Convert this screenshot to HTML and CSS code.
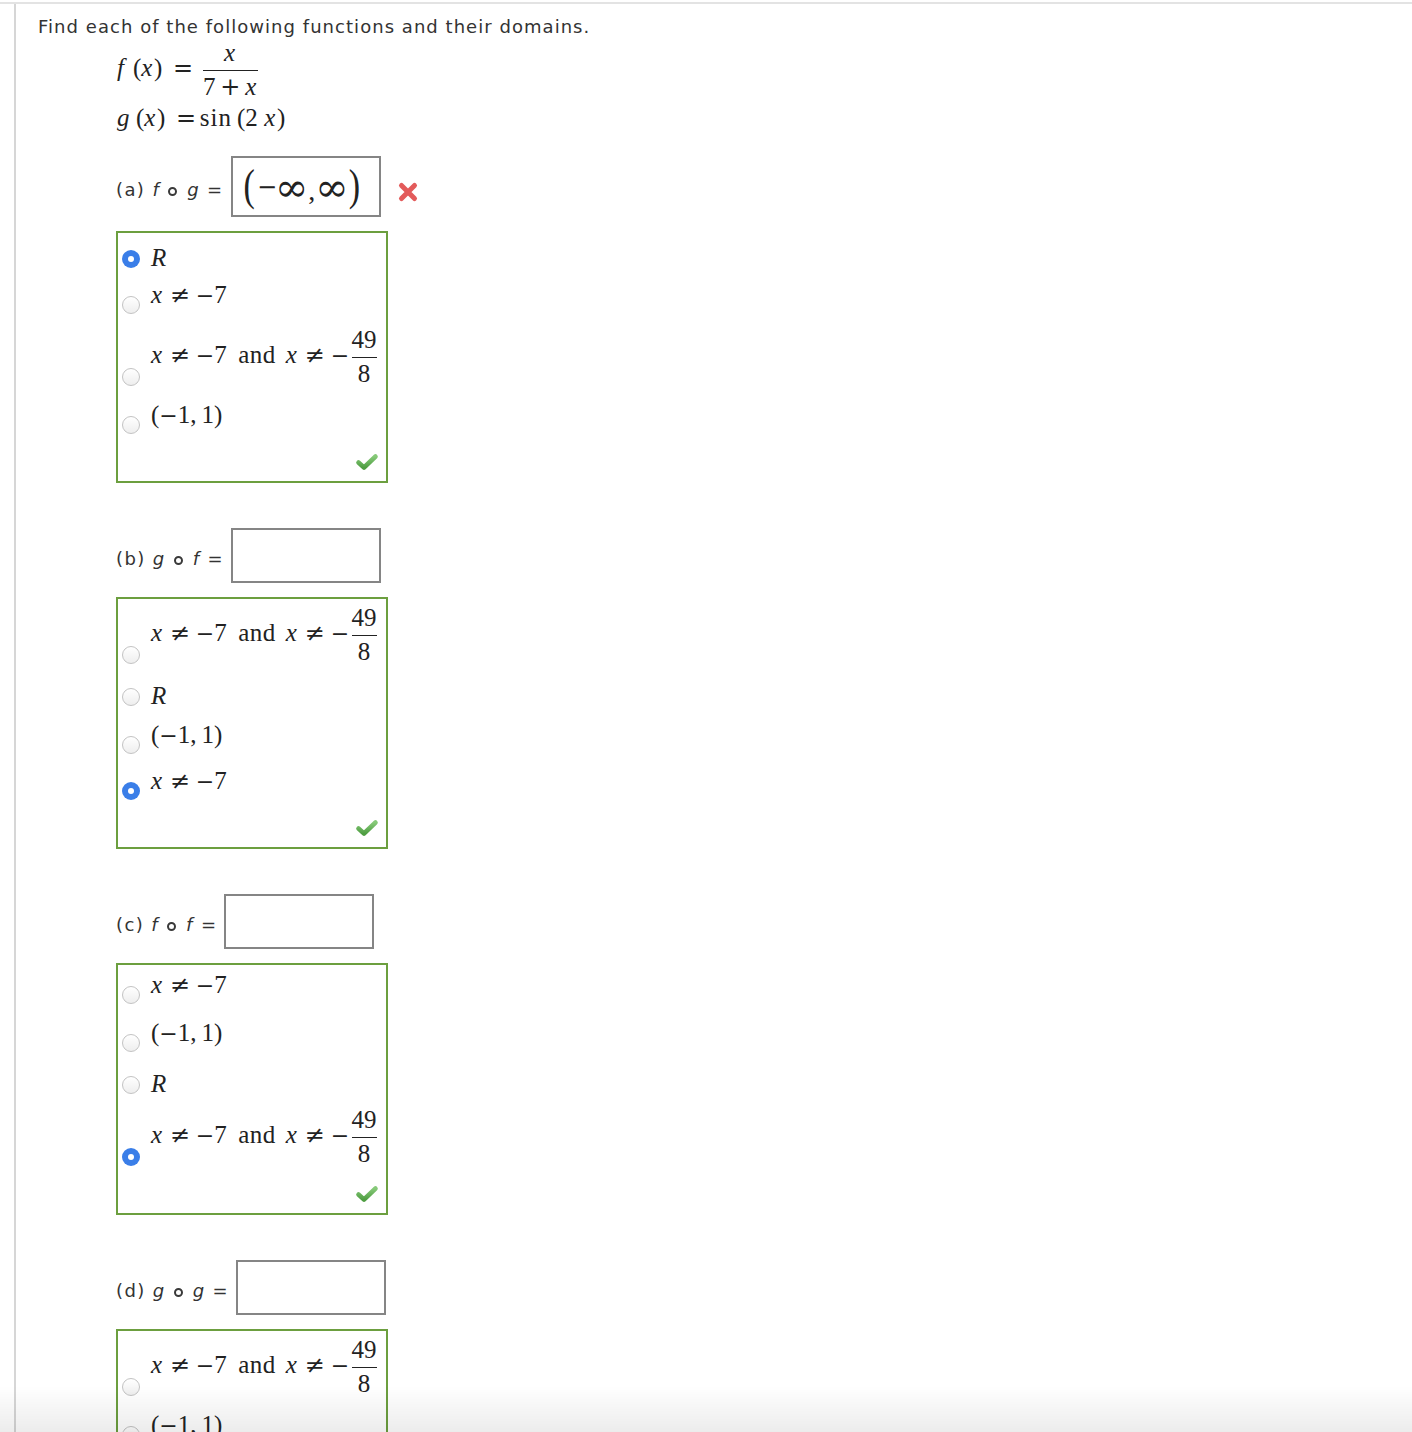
FILE: index.html
```html
<!DOCTYPE html>
<html lang="en">
<head>
<meta charset="utf-8">
<title>Composite functions</title>
<link rel="stylesheet" href="styles.css">
</head>
<body>
<div class="page">
  <div class="content">
    <p class="intro">Find each of the following functions and their domains.</p>
    <div class="defs">
      <div class="mrow frow"><span class="mi wf">f</span><span class="th"></span>(<span class="mi">x</span>)<span class="rel">=</span><span class="frac"><span class="num"><span class="mi">x</span></span><span class="bar"></span><span class="den">7<span class="bin">+</span><span class="mi">x</span></span></span></div>
      <div class="mrow grow"><span class="mi">g</span><span class="th"></span>(<span class="mi">x</span>)<span class="rel">=</span><span class="fn">sin</span><span class="th"></span>(2<span class="th2"></span><span class="mi">x</span>)</div>
    </div>

    <section class="part first">
      <div class="answer-row">
        <span class="label">(a) <i>f</i><span class="ring"></span><i>g</i> =</span>
        <div class="answer-box tall"><span class="big-paren">(</span><span class="neg">−</span><span class="inf">∞</span><span class="comma">,</span><span class="inf">∞</span><span class="big-paren">)</span></div>
        <svg class="wrong" width="22" height="22" viewBox="0 0 22 22"><path d="M4.5 4.5 L17.5 17.5 M17.5 4.5 L4.5 17.5" stroke="#e35b5b" stroke-width="5" stroke-linecap="round" fill="none"/></svg>
      </div>
      <div class="choices">
        <div class="opt r"><span class="radio on"></span><span class="m"><span class="mi">R</span></span></div>
        <div class="opt neq"><span class="radio"></span><span class="m"><span class="mi">x</span><span class="rel">≠</span><span class="un">−</span>7</span></div>
        <div class="opt fr"><span class="radio"></span><span class="m"><span class="mi">x</span><span class="rel">≠</span><span class="un">−</span>7<span class="txt">and</span><span class="mi">x</span><span class="rel">≠</span><span class="un">−</span><span class="frac"><span class="num">49</span><span class="bar"></span><span class="den">8</span></span></span></div>
        <div class="opt int"><span class="radio"></span><span class="m">(<span class="un">−</span>1,<span class="th"></span>1)</span></div>
        <div class="check-row"><svg class="ok" width="24" height="18" viewBox="0 0 24 18"><defs><linearGradient id="g1" x1="0" y1="0" x2="0" y2="1"><stop offset="0" stop-color="#86c978"/><stop offset="1" stop-color="#4f9e42"/></linearGradient></defs><path d="M3.5 9.5 L9 14.5 L20.5 3.5" stroke="url(#g1)" stroke-width="4.6" stroke-linecap="round" stroke-linejoin="round" fill="none"/></svg></div>
      </div>
    </section>

    <section class="part">
      <div class="answer-row">
        <span class="label">(b) <i>g</i><span class="ring"></span><i>f</i> =</span>
        <div class="answer-box"></div>
      </div>
      <div class="choices">
        <div class="opt fr"><span class="radio"></span><span class="m"><span class="mi">x</span><span class="rel">≠</span><span class="un">−</span>7<span class="txt">and</span><span class="mi">x</span><span class="rel">≠</span><span class="un">−</span><span class="frac"><span class="num">49</span><span class="bar"></span><span class="den">8</span></span></span></div>
        <div class="opt r"><span class="radio"></span><span class="m"><span class="mi">R</span></span></div>
        <div class="opt int"><span class="radio"></span><span class="m">(<span class="un">−</span>1,<span class="th"></span>1)</span></div>
        <div class="opt neq"><span class="radio on"></span><span class="m"><span class="mi">x</span><span class="rel">≠</span><span class="un">−</span>7</span></div>
        <div class="check-row"><svg class="ok" width="24" height="18" viewBox="0 0 24 18"><defs><linearGradient id="g2" x1="0" y1="0" x2="0" y2="1"><stop offset="0" stop-color="#86c978"/><stop offset="1" stop-color="#4f9e42"/></linearGradient></defs><path d="M3.5 9.5 L9 14.5 L20.5 3.5" stroke="url(#g2)" stroke-width="4.6" stroke-linecap="round" stroke-linejoin="round" fill="none"/></svg></div>
      </div>
    </section>

    <section class="part">
      <div class="answer-row">
        <span class="label">(c) <i>f</i><span class="ring"></span><i>f</i> =</span>
        <div class="answer-box"></div>
      </div>
      <div class="choices">
        <div class="opt neq"><span class="radio"></span><span class="m"><span class="mi">x</span><span class="rel">≠</span><span class="un">−</span>7</span></div>
        <div class="opt int"><span class="radio"></span><span class="m">(<span class="un">−</span>1,<span class="th"></span>1)</span></div>
        <div class="opt r"><span class="radio"></span><span class="m"><span class="mi">R</span></span></div>
        <div class="opt fr"><span class="radio on"></span><span class="m"><span class="mi">x</span><span class="rel">≠</span><span class="un">−</span>7<span class="txt">and</span><span class="mi">x</span><span class="rel">≠</span><span class="un">−</span><span class="frac"><span class="num">49</span><span class="bar"></span><span class="den">8</span></span></span></div>
        <div class="check-row"><svg class="ok" width="24" height="18" viewBox="0 0 24 18"><defs><linearGradient id="g3" x1="0" y1="0" x2="0" y2="1"><stop offset="0" stop-color="#86c978"/><stop offset="1" stop-color="#4f9e42"/></linearGradient></defs><path d="M3.5 9.5 L9 14.5 L20.5 3.5" stroke="url(#g3)" stroke-width="4.6" stroke-linecap="round" stroke-linejoin="round" fill="none"/></svg></div>
      </div>
    </section>

    <section class="part">
      <div class="answer-row">
        <span class="label">(d) <i>g</i><span class="ring"></span><i>g</i> =</span>
        <div class="answer-box"></div>
      </div>
      <div class="choices">
        <div class="opt fr"><span class="radio"></span><span class="m"><span class="mi">x</span><span class="rel">≠</span><span class="un">−</span>7<span class="txt">and</span><span class="mi">x</span><span class="rel">≠</span><span class="un">−</span><span class="frac"><span class="num">49</span><span class="bar"></span><span class="den">8</span></span></span></div>
        <div class="opt int"><span class="radio"></span><span class="m">(<span class="un">−</span>1,<span class="th"></span>1)</span></div>
        <div class="opt r"><span class="radio"></span><span class="m"><span class="mi">R</span></span></div>
        <div class="opt neq"><span class="radio"></span><span class="m"><span class="mi">x</span><span class="rel">≠</span><span class="un">−</span>7</span></div>
        <div class="check-row"></div>
      </div>
    </section>
  </div>
</div>
<div class="fade"></div>
</body>
</html>
```
FILE: styles.css
```css
html, body {
  margin: 0;
  padding: 0;
  background: #fff;
}
body {
  font-family: "DejaVu Sans", Verdana, sans-serif;
  color: #333;
}
.page {
  margin-top: 2px;
  border-top: 2px solid #e3e3e3;
}
.content {
  margin-left: 14px;
  border-left: 2px solid #d6d6d6;
  padding: 12px 0 60px 22px;
}
.intro {
  margin: 0;
  font-size: 18px;
  line-height: 22px;
  letter-spacing: 1.04px;
}

/* math */
.defs {
  margin: 3px 0 0 79px;
  font-family: "Liberation Serif", "Times New Roman", serif;
  font-size: 25px;
  line-height: 24px;
  color: #222;
}
.mrow { white-space: nowrap; }
.grow { margin-top: 7px; }
.mi { font-style: italic; padding-right: 0.06em; }
.wf { padding-right: 0.16em; }
.th { display: inline-block; width: 0.2em; }
.th2 { display: inline-block; width: 0.26em; }
.fn { letter-spacing: 0.04em; }
.rel, .un, .bin {
  display: inline-block;
  font-family: "DejaVu Serif", serif;
  font-size: 24px;
  text-align: center;
}
.rel {
  width: 0.84em;
  margin: 0 0.25em;
}
.defs .rel { margin: 0 0.15em 0 0.45em; }
.defs .frow .rel { margin-right: 0.28em; }
.bin {
  width: 0.84em;
  margin: 0 0.2em;
}
.un {
  font-size: 22px;
  width: 0.84em;
}
.txt { margin: 0 0.4em 0 0.46em; letter-spacing: 0.02em; }
.frac {
  display: inline-flex;
  flex-direction: column;
  align-items: center;
  vertical-align: middle;
  padding: 0 0.12em;
}
.m .frac { padding: 0 0.22em 0 0.1em; }
.frac .num { padding-bottom: 5px; }
.frac .bar {
  align-self: stretch;
  border-top: 1.3px solid #222;
}
.frac .den { padding-top: 4px; }

/* parts */
.part { margin-top: 45px; }
.part.first { margin-top: 26px; }
.answer-row {
  display: flex;
  align-items: center;
  margin-left: 78px;
}
.label {
  font-size: 18px;
  line-height: 22px;
  padding-top: 7px;
  white-space: nowrap;
  letter-spacing: 1.4px;
}
.ring {
  display: inline-block;
  box-sizing: border-box;
  width: 9px;
  height: 9px;
  margin: 0 10px 0 8px;
  border: 2px solid #3a3a3a;
  border-radius: 50%;
  vertical-align: 0;
}
.answer-box {
  box-sizing: border-box;
  width: 150px;
  height: 55px;
  margin-left: 7px;
  border: 2px solid #858585;
  background: #fff;
  display: flex;
  align-items: center;
  padding-left: 11px;
  font-family: "Liberation Serif", "Times New Roman", serif;
  color: #222;
}
.answer-box.tall { height: 61px; }
.big-paren {
  display: inline-block;
  font-size: 34px;
  line-height: 40px;
  transform: scaleY(1.28);
  margin-top: -2px;
}
.neg {
  font-family: "DejaVu Serif", serif;
  font-size: 24px;
  margin: 0 -2px 0 2px;
}
.inf {
  font-family: "DejaVu Serif", serif;
  font-size: 40px;
  line-height: 30px;
}
.comma {
  font-size: 28px;
  margin: 8px 0 0 0;
}
.wrong {
  margin-left: 16px;
  margin-top: 10px;
  flex: none;
}

.choices {
  box-sizing: border-box;
  width: 272px;
  margin: 14px 0 0 78px;
  border: 2px solid #6c9f3f;
  display: flex;
  flex-direction: column;
  gap: 7px;
}
.opt {
  display: flex;
  align-items: flex-end;
  padding-left: 4px;
}
.opt.r { height: 35px; }
.opt.neq { height: 39px; }
.opt.int { height: 41px; }
.opt.fr { height: 65px; }
.radio {
  flex: none;
  box-sizing: border-box;
  width: 18px;
  height: 18px;
  border-radius: 50%;
  border: 1px solid #c3c3c3;
  background: linear-gradient(#ffffff, #eeeeee);
}
.radio.on {
  border: none;
  background: #3a7ee8;
  display: flex;
  align-items: center;
  justify-content: center;
}
.radio.on::after {
  content: "";
  width: 6px;
  height: 6px;
  border-radius: 50%;
  background: #fff;
}
.m {
  margin-left: 11px;
  font-family: "Liberation Serif", "Times New Roman", serif;
  font-size: 25px;
  line-height: 24px;
  color: #222;
  white-space: nowrap;
}
.opt.r .m { margin-bottom: -2px; }
.opt.neq .m, .opt.int .m { margin-bottom: 6px; }
.opt.fr .m { margin-bottom: 0; }
.check-row {
  height: 40px;
  box-sizing: border-box;
  display: flex;
  justify-content: flex-end;
  align-items: flex-start;
  padding: 12px 7px 0 0;
}
.ok { flex: none; }

.fade {
  position: fixed;
  left: 0;
  right: 0;
  bottom: 0;
  height: 46px;
  pointer-events: none;
  background: linear-gradient(rgba(0, 0, 0, 0), rgba(0, 0, 0, 0.075));
}
```
